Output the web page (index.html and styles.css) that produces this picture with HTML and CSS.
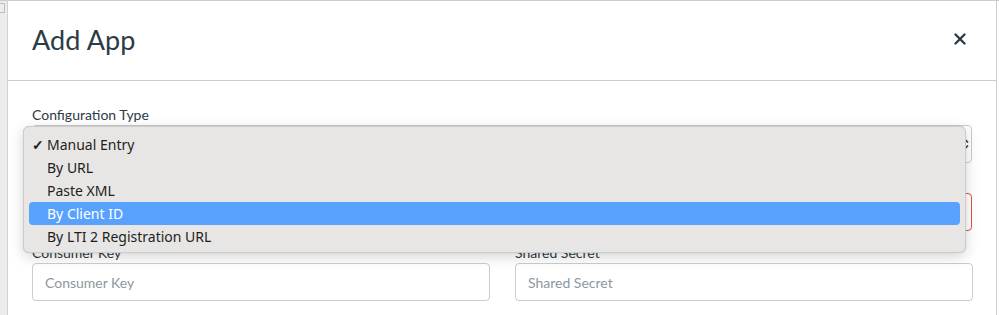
FILE: index.html
```html
<!DOCTYPE html>
<html lang="en">
<head>
<meta charset="utf-8">
<title>Add App</title>
<link rel="stylesheet" href="styles.css">
</head>
<body>
<div class="backdrop">
  <div class="bg-strip"><span class="bg-frag"></span></div>
  <div class="modal">
    <header class="modal-header">
      <h1 class="modal-title">Add App</h1>
      <button class="close" aria-label="Close">
        <svg width="12" height="12" viewBox="0 0 12 12"><path d="M1.5 1.5 L10.5 10.5 M10.5 1.5 L1.5 10.5" stroke="#2d3b45" stroke-width="2.4" stroke-linecap="round"/></svg>
      </button>
    </header>
    <div class="modal-body">
      <div class="field f1">
        <label class="label">Configuration Type</label>
        <div class="select" aria-label="Manual Entry">
          <span class="select-value"></span>
          <svg class="select-arrow" width="8" height="12" viewBox="0 0 8 12"><path d="M1 4.5 L4 1.5 L7 4.5 M1 7.5 L4 10.5 L7 7.5" fill="none" stroke="#2d3b45" stroke-width="1.6"/></svg>
        </div>
        <ul class="menu">
          <li class="opt checked"><span class="check">✓</span>Manual Entry</li>
          <li class="opt">By URL</li>
          <li class="opt">Paste XML</li>
          <li class="opt active">By Client ID</li>
          <li class="opt">By LTI 2 Registration URL</li>
        </ul>
      </div>
      <div class="field f2">
        <label class="label" aria-label="Name"></label>
        <div class="input error"></div>
      </div>
      <div class="row">
        <div class="field">
          <label class="label">Consumer Key</label>
          <div class="input"><span class="ph">Consumer Key</span></div>
        </div>
        <div class="field">
          <label class="label">Shared Secret</label>
          <div class="input"><span class="ph">Shared Secret</span></div>
        </div>
      </div>
    </div>
  </div>
</div>
</body>
</html>
```

FILE: styles.css
```css
* { box-sizing: border-box; }
html, body { margin: 0; padding: 0; }
body {
  width: 999px;
  height: 315px;
  overflow: hidden;
  background: #ffffff;
  font-family: Lato, "Liberation Sans", sans-serif;
  color: #2d3b45;
}
.backdrop {
  display: flex;
  height: 315px;
  border-top: 1px solid #c8cdd0;
}
.bg-strip {
  width: 8px;
  flex: none;
  background: #ececec;
  border-right: 1px solid #d2d2d2;
  position: relative;
}
.bg-frag {
  position: absolute;
  left: 0;
  top: 2px;
  width: 5px;
  height: 10px;
  border: 1px solid #bdbdbd;
  border-left: none;
}
.modal {
  width: 989px;
  flex: none;
  background: #fff;
  border-right: 1px solid #c8cdd0;
  position: relative;
}
.modal-header {
  height: 80px;
  border-bottom: 1px solid #c7cdd1;
  display: flex;
  align-items: center;
  justify-content: space-between;
  padding: 0 30px 0 24px;
}
.modal-title {
  margin: 0;
  font-size: 27px;
  font-weight: 400;
  color: #2d3b45;
  letter-spacing: 0.1px;
  padding-bottom: 2px;
}
.close {
  border: none;
  background: none;
  padding: 0;
  width: 12px;
  height: 12px;
  display: flex;
  margin-bottom: 3px;
}
.modal-body {
  padding: 24px 24px 0 24px;
}
.field { position: relative; }
.f1 { margin-bottom: 10px; }
.f2 { margin-bottom: 12px; }
.label {
  display: block;
  height: 20px;
  font-size: 14px;
  line-height: 20px;
  color: #2d3b45;
}
.select, .input {
  height: 38px;
  border: 1px solid #c7cdd1;
  border-radius: 4px;
  background: #fff;
  display: flex;
  align-items: center;
  padding: 0 12px;
  font-size: 14px;
}
.select { justify-content: space-between; }
.select-arrow { margin-right: -10px; }
.input.error { border-color: #e0513f; }
.ph { color: #8e979e; }
.row {
  display: grid;
  grid-template-columns: 458px 458px;
  column-gap: 25px;
}
.menu {
  position: absolute;
  left: -9px;
  top: 21px;
  width: 943px;
  margin: 0;
  padding: 6px 5px 4px;
  list-style: none;
  background: #e8e6e4;
  border: 1px solid #cfcdcb;
  border-radius: 6px;
  box-shadow: 0 4px 14px rgba(0,0,0,0.16), 0 0 1px rgba(0,0,0,0.2);
  font-family: "Noto Sans", "Liberation Sans", sans-serif;
  font-size: 14px;
  color: #1e1e1e;
  z-index: 5;
}
.opt {
  height: 23px;
  line-height: 23px;
  padding-left: 18px;
  border-radius: 4px;
  position: relative;
}
.opt.active {
  background: #58a2fe;
  color: #fff;
}
.check {
  position: absolute;
  left: 3px;
  top: 0;
  font-size: 14px;
  font-weight: 700;
}
```
